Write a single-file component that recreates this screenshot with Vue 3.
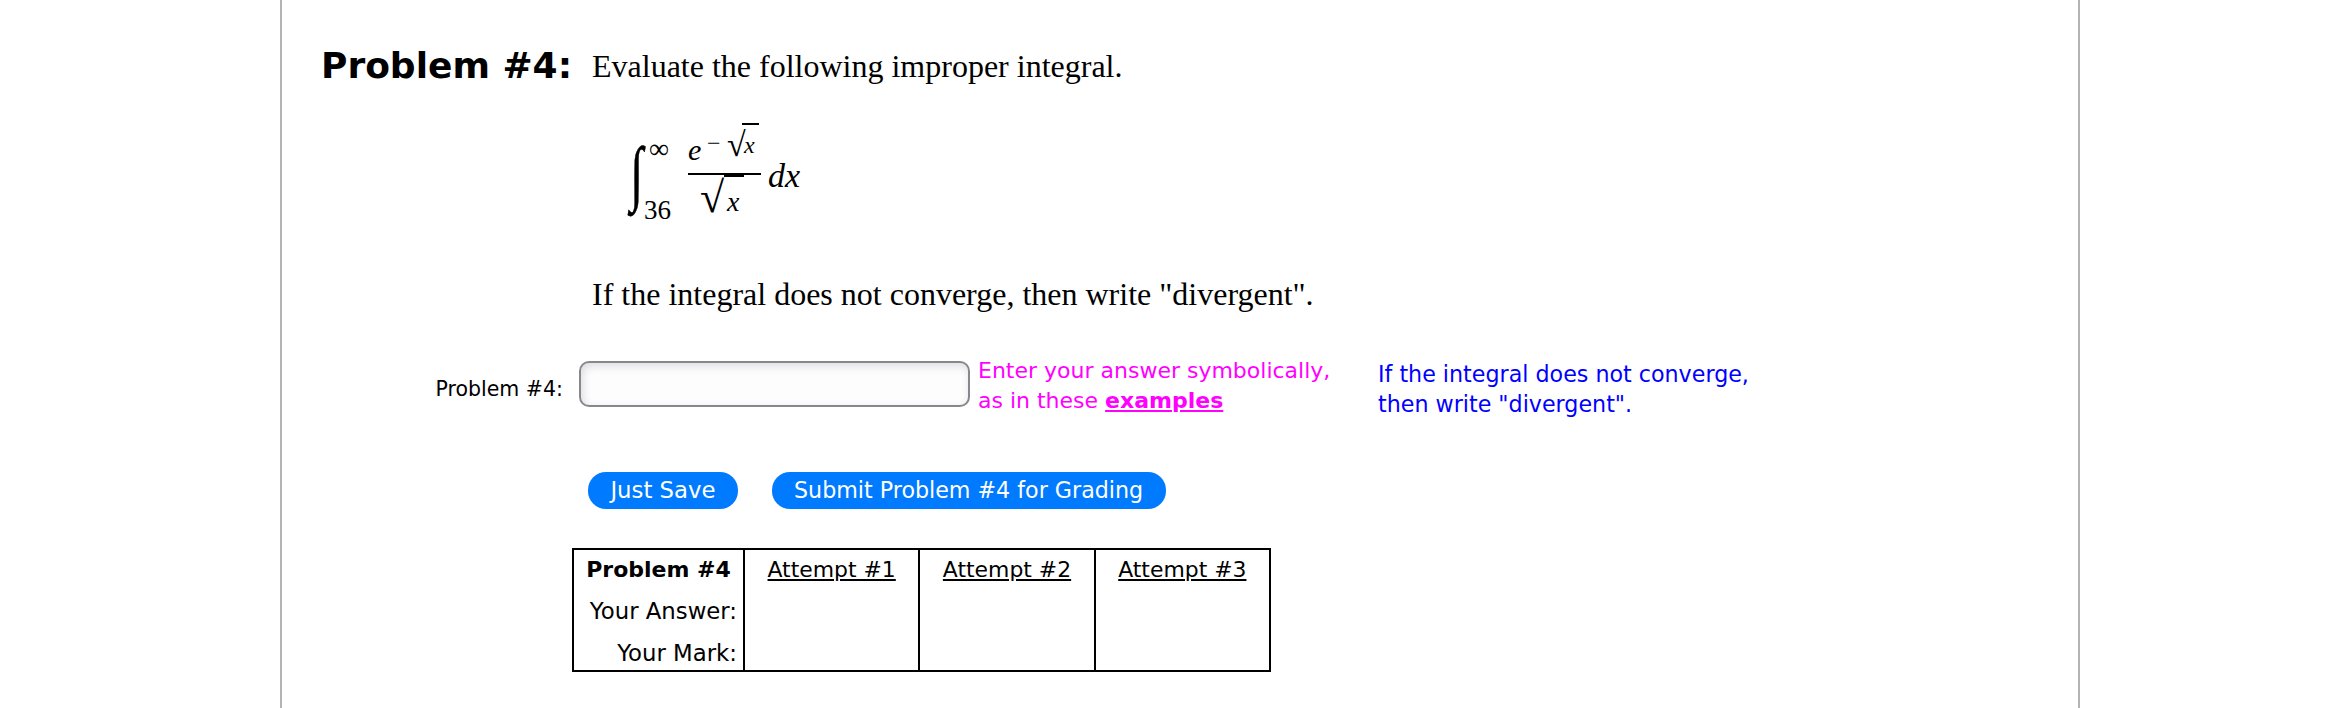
<script setup>
const attempts = ['Attempt #1', 'Attempt #2', 'Attempt #3']
</script>

<template>
  <div class="page">
    <div class="sheet">
      <div class="question">
        <div class="title">Problem #4:</div>
        <div class="body">
          <div class="line">Evaluate the following improper integral.</div>
          <div class="formula">
            <span class="integral">∫</span>
            <span class="limits"><span class="upper">∞</span><span class="lower">36</span></span>
            <span class="fraction">
              <span class="num">
                <i class="base">e</i>
                <span class="minus">−</span>
                <span class="root small"><span class="radical">√</span><i class="radicand">x</i></span>
              </span>
              <span class="den">
                <span class="root large"><span class="radical">√</span><i class="radicand">x</i></span>
              </span>
            </span>
            <i class="dx">dx</i>
          </div>
          <div class="line note">If the integral does not converge, then write "divergent".</div>
        </div>
      </div>

      <div class="answer">
        <label class="answer-label">Problem #4:</label>
        <input class="answer-input" type="text" />
        <div class="hint">Enter your answer symbolically,<br />as in these <a class="hint-link">examples</a></div>
        <div class="extra">If the integral does not converge,<br />then write "divergent".</div>
      </div>

      <div class="buttons">
        <button class="btn save">Just Save</button>
        <button class="btn submit">Submit Problem #4 for Grading</button>
      </div>

      <table class="attempts">
        <tbody>
          <tr class="row-a">
            <th class="head">Problem #4</th>
            <td v-for="a in attempts" :key="a" rowspan="3" class="cell"><u>{{ a }}</u></td>
          </tr>
          <tr class="row-b"><th class="rowlabel">Your Answer:</th></tr>
          <tr class="row-c"><th class="rowlabel"><div class="clip">Your Mark:</div></th></tr>
        </tbody>
      </table>
    </div>
  </div>
</template>

<style>
html, body { margin: 0; background: #fff; }
</style>

<style scoped>
.page {
  height: 708px;
  overflow: hidden;
  font-family: "DejaVu Sans", sans-serif;
  color: #000;
}
.sheet {
  box-sizing: border-box;
  width: 1800px;
  height: 708px;
  margin-left: 280px;
  border-left: 2px solid #b4b4b4;
  border-right: 2px solid #b4b4b4;
  padding-top: 44px;
}
.question {
  display: flex;
  align-items: flex-start;
  padding-left: 39px;
}
.title {
  width: 271px;
  flex: none;
  font-weight: 700;
  font-size: 36px;
  line-height: 44px;
  white-space: nowrap;
}
.body {
  font-family: "Liberation Serif", serif;
  font-size: 32px;
}
.line { line-height: 44px; }
.formula {
  display: flex;
  align-items: flex-start;
  height: 151px;
  margin: 33px 0 0 35px;
  font-family: "Liberation Serif", serif;
}
.integral {
  display: block;
  font-size: 72px;
  line-height: 96px;
  width: 19px;
  margin-top: 4px;
  transform: scaleX(0.65);
  -webkit-text-stroke: 0.6px #000;
}
.limits {
  display: flex;
  flex-direction: column;
  width: 42px;
}
.upper { font-size: 28px; line-height: 26px; margin: 15px 0 0 3px; }
.lower { font-size: 27px; line-height: 28px; margin: 34px 0 0 -2px; }
.fraction {
  display: flex;
  flex-direction: column;
  width: 73px;
}
.num {
  display: flex;
  align-items: flex-end;
  height: 52px;
  border-bottom: 2px solid #000;
}
.base { font-size: 30px; line-height: 34px; width: 19px; margin-bottom: 6px; }
.minus { font-size: 24px; line-height: 20px; width: 22px; margin-bottom: 20px; }
.root { display: inline-flex; align-items: flex-start; }
.radical { display: block; }
.radicand { display: block; border-top: 2px solid #000; }
.small { height: 50px; }
.small .radical { font-size: 34px; line-height: 40px; width: 15px; margin-top: 2px; margin-left: -2px; }
.small .radicand { font-size: 24px; line-height: 40px; padding: 0 2px; width: 17px; box-sizing: border-box; }
.den { display: flex; padding-left: 12px; margin-top: -1px; }
.large .radical { font-size: 44px; line-height: 48px; width: 24px; }
.large .radicand { font-size: 28px; line-height: 50px; border-top-width: 3px; width: 20px; padding-left: 3px; box-sizing: border-box; }
.dx { font-size: 34px; line-height: 38px; margin: 36px 0 0 7px; }

.answer {
  display: flex;
  align-items: center;
  margin-top: 38px;
  font-size: 22px;
  line-height: 30px;
}
.answer-label {
  width: 281px;
  margin-top: 10px;
  text-align: right;
  font-size: 20.5px;
}
.answer-input {
  box-sizing: border-box;
  width: 391px;
  height: 46px;
  margin-left: 16px;
  border: 2px solid #88888c;
  border-radius: 10px;
  background: #fdfdfe;
  box-shadow: inset 2px 3px 8px #dcdce0;
  outline: none;
}
.hint {
  width: 400px;
  margin-left: 8px;
  color: #f0f;
  position: relative;
  top: 2px;
}
.hint-link { font-weight: 700; text-decoration: underline; }
.extra { color: #00f; font-size: 22.2px; position: relative; top: 5px; }

.buttons {
  display: flex;
  gap: 34px;
  margin: 58px 0 0 306px;
}
.btn {
  height: 37px;
  padding: 0 22px;
  border: 0;
  border-radius: 18px;
  background: #007aff;
  color: #fff;
  font-family: "DejaVu Sans", sans-serif;
  font-size: 22.2px;
  line-height: 37px;
}
.save { min-width: 150px; font-size: 22.8px; padding: 0 20px; }
.submit { padding-right: 23px; }
.attempts {
  border-collapse: collapse;
  margin: 39px 0 0 290px;
  border: 2px solid #000;
  font-size: 21.9px;
  table-layout: fixed;
  width: 699px;
}
.attempts th, .attempts td { padding: 0; }
.row-a th { height: 39px; line-height: 39px; }
.row-b th { height: 44px; line-height: 44px; }
.row-c th { height: 37px; }
.clip { height: 37px; line-height: 41px; }
.head { width: 169px; text-align: center; font-weight: 700; font-size: 22px; }
.rowlabel { font-weight: 400; text-align: right; font-size: 22.8px; }
.attempts .rowlabel { padding-right: 6px; }
.attempts .cell {
  border-left: 2px solid #000;
  vertical-align: top;
  text-align: center;
  line-height: 39px;
}
</style>
